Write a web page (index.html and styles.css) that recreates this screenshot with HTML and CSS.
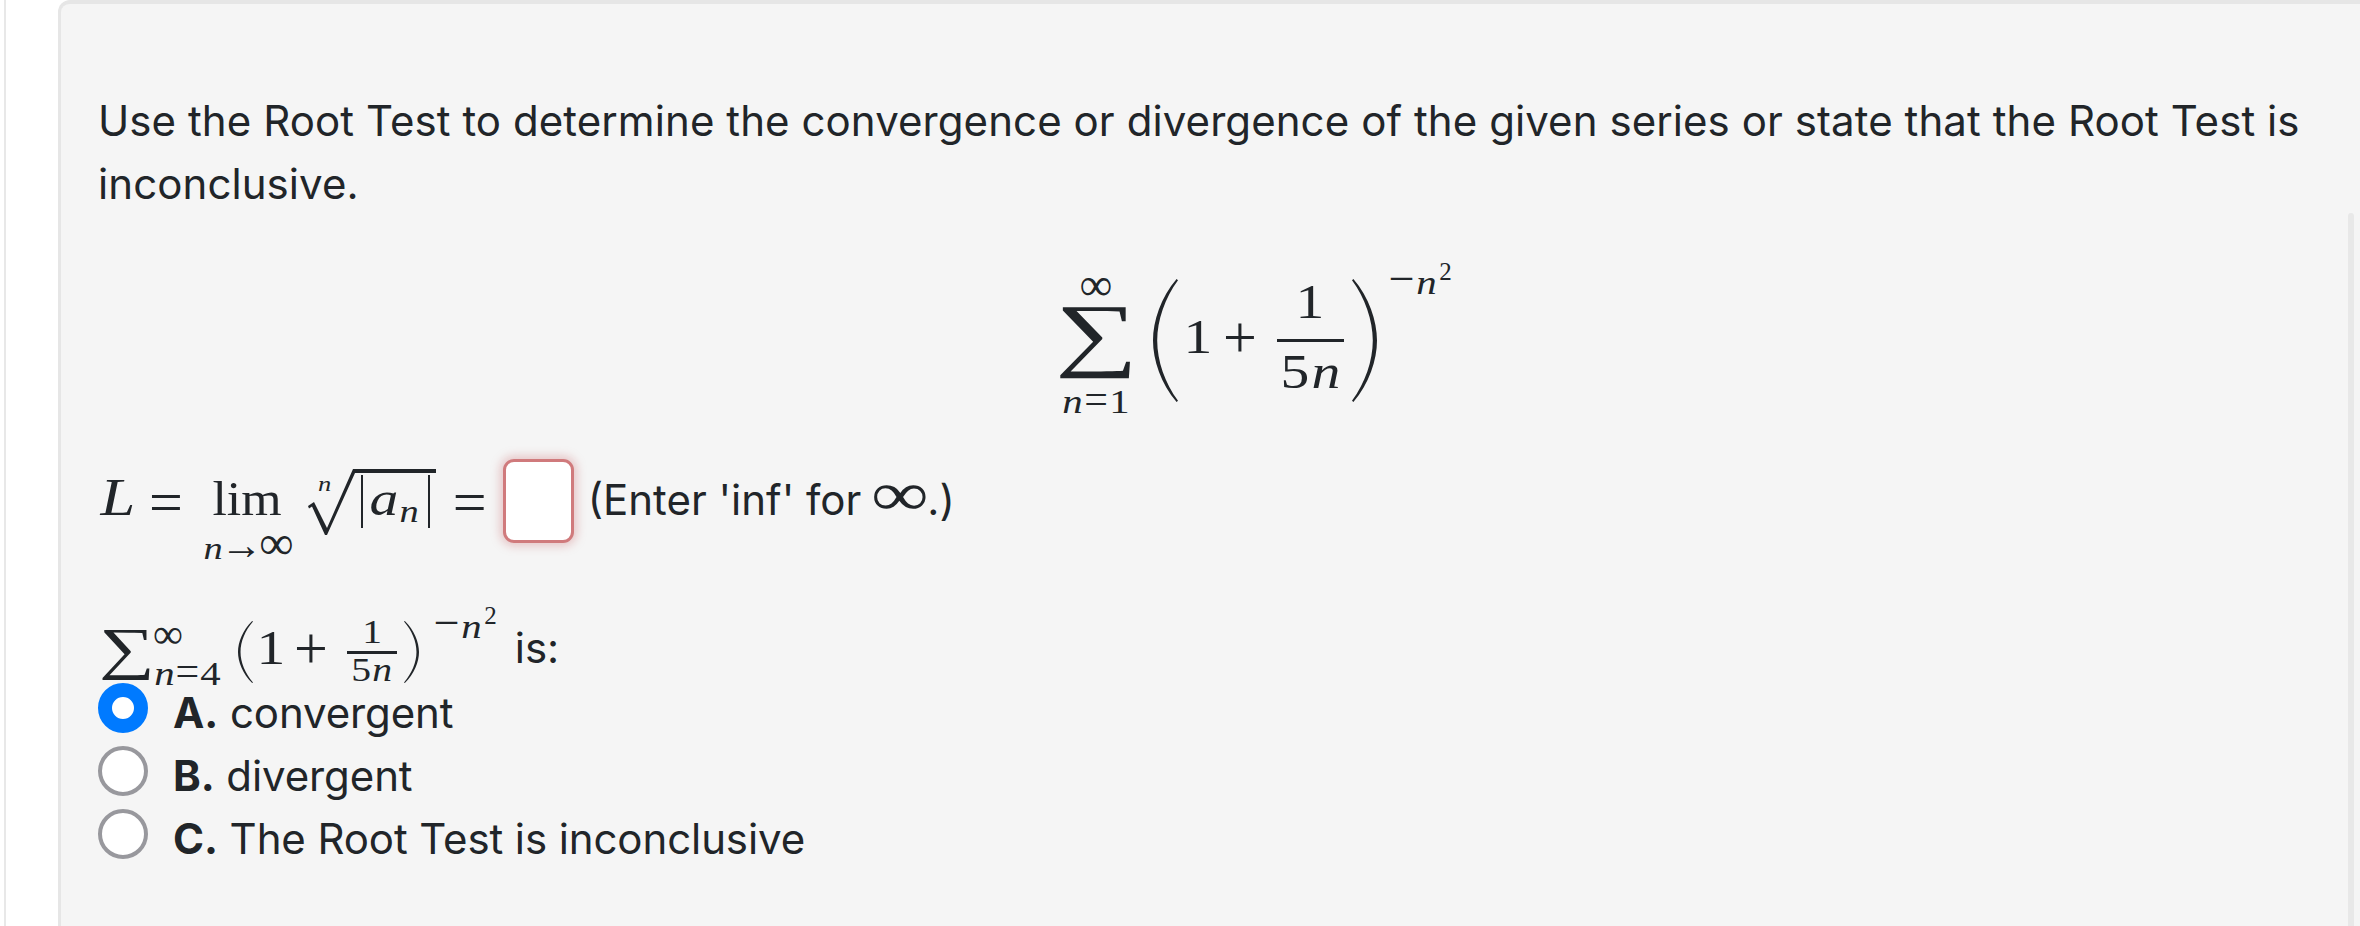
FILE: index.html
```html
<!DOCTYPE html>
<html lang="en">
<head>
<meta charset="utf-8">
<title>Root Test</title>
<link rel="stylesheet" href="styles.css">
</head>
<body>
<svg class="defs" width="0" height="0" aria-hidden="true">
  <symbol id="paren-l" viewBox="0 0 25 123" preserveAspectRatio="none">
    <path d="M23.6 0C8 18 0 42 0 61.5C0 81 8 105 23.6 123L25 121.8C12 104 4.2 82 4.2 61.5C4.2 41 12 19 25 1.2Z"/>
  </symbol>
  <symbol id="paren-r" viewBox="0 0 25 123" preserveAspectRatio="none">
    <path d="M1.4 0C17 18 25 42 25 61.5C25 81 17 105 1.4 123L0 121.8C13 104 20.8 82 20.8 61.5C20.8 41 13 19 0 1.2Z"/>
  </symbol>
</svg>
<div class="page">
  <main class="panel">
    <p class="question">Use the Root Test to determine the convergence or divergence of the given series or state that the Root Test is inconclusive.</p>

    <div class="display math">
      <div class="big-sum">
        <span class="big-inf">∞</span>
        <span class="big-sigma">∑</span>
        <span class="big-under"><span class="w">n</span><span class="up under-eq">=</span><span class="up w">1</span></span>
      </div>
      <svg class="big-paren bp-l"><use href="#paren-l"/></svg>
      <span class="d-one up w">1</span>
      <span class="d-plus up">+</span>
      <div class="d-frac">
        <span class="d-num up w">1</span>
        <span class="d-bar"></span>
        <span class="d-den"><span class="up w">5</span><span class="w">n</span></span>
      </div>
      <svg class="big-paren bp-r"><use href="#paren-r"/></svg>
      <div class="d-exp">
        <span class="exp-n"><span class="up minus">−</span><span class="w">n</span></span>
        <span class="exp-2 up">2</span>
      </div>
    </div>

    <div class="limit math">
      <span class="l-L w">L</span>
      <span class="l-eq up">=</span>
      <div class="lim">
        <span class="lim-word up w">lim</span>
        <span class="lim-under"><span class="w">n</span><span class="up lim-arrow">→</span><span class="up lim-inf">∞</span></span>
      </div>
      <div class="root">
        <svg class="radical" viewBox="0 0 47 70">
          <path d="M0 37L6 33L19 59L45 0H47V4L19 66H17L4 37.5L1 39.5Z"/>
        </svg>
        <span class="root-index w">n</span>
        <div class="radicand">
          <div class="abs">
            <span class="abs-a w">a</span><span class="abs-n w">n</span>
          </div>
        </div>
      </div>
      <span class="l-eq2 up">=</span>
      <input class="answer" type="text" aria-label="Limit value">
      <span class="hint">(Enter 'inf' for <span class="hint-inf">∞</span>.)</span>
    </div>

    <div class="series math">
      <span class="s-sigma">∑</span>
      <div class="s-limits">
        <span class="s-inf">∞</span>
        <span class="s-under"><span class="w">n</span><span class="up under-eq">=</span><span class="up w">4</span></span>
      </div>
      <svg class="small-paren sp-l"><use href="#paren-l"/></svg>
      <span class="s-one up w">1</span>
      <span class="s-plus up">+</span>
      <div class="s-frac">
        <span class="s-num up w">1</span>
        <span class="s-bar"></span>
        <span class="s-den"><span class="up w">5</span><span class="w">n</span></span>
      </div>
      <svg class="small-paren sp-r"><use href="#paren-r"/></svg>
      <div class="s-exp">
        <span class="exp-n"><span class="up minus">−</span><span class="w">n</span></span>
        <span class="exp-2 up">2</span>
      </div>
      <span class="is">is:</span>
    </div>

    <div class="options">
      <label class="option"><span class="radio checked"></span><span class="opt-text"><b>A.</b> convergent</span></label>
      <label class="option"><span class="radio"></span><span class="opt-text"><b>B.</b> divergent</span></label>
      <label class="option"><span class="radio"></span><span class="opt-text"><b>C.</b> The Root Test is inconclusive</span></label>
    </div>
  </main>
  <div class="scrollbar"></div>
</div>
</body>
</html>
```

FILE: styles.css
```css
html, body { margin: 0; padding: 0; background: #fff; }
body { width: 2360px; height: 926px; overflow: hidden; }
.defs { position: absolute; }
.page {
  position: relative;
  box-sizing: border-box;
  width: 2360px;
  height: 926px;
  padding-left: 58px;
  overflow: hidden;
  color: #212529;
  font-family: Inter, "Noto Sans", sans-serif;
  font-size: 42px;
}
.page::before {
  content: "";
  position: absolute;
  left: 4px; top: 0; bottom: 0;
  width: 2px;
  background: #e8e8e8;
}
.panel {
  box-sizing: border-box;
  width: 2330px;
  height: 960px;
  background: #f5f5f5;
  border-left: 3px solid #e6e6e6;
  border-top: 4px solid #e6e6e6;
  border-top-left-radius: 12px;
  padding: 85px 0 0 37px;
}
.question {
  margin: 0;
  width: 2230px;
  line-height: 63px;
  letter-spacing: 0.08px;
}
.math { font-family: "Liberation Serif", serif; display: flex; align-items: flex-start; }
.math span { line-height: 1; white-space: nowrap; }
.up { font-style: normal; }
.math .w { display: inline-block; transform: scaleX(1.2); margin: 0 0.08em; }

/* display equation */
.display { margin: 47px 0 0 964px; height: 197px; font-size: 48px; font-style: italic; }
.big-sum { display: flex; flex-direction: column; align-items: center; width: 68px; margin-top: 8px; }
.math .big-inf { font-style: normal; font-size: 46px; height: 30px; line-height: 30px; }
.math .big-sigma { font-style: normal; font-size: 82px; line-height: 72px; height: 72px; margin-top: -2px; transform: scaleX(1.42); }
.math .big-under { font-size: 34px; margin-top: 8px; }
.math .under-eq { font-size: 42px; }
.big-paren { display: block; width: 25px; height: 123px; fill: #212529; flex: none; }
.bp-l { margin: 17px 0 0 23px; }
.bp-r { margin: 17px 0 0 8px; }
.math .d-one { margin: 51px 4px 0 8px; }
.math .d-plus { font-size: 60px; margin: 45px 0 0 9px; }
.d-frac { display: flex; flex-direction: column; align-items: center; width: 67px; margin: 16px 0 0 20px; }
.math .d-num { height: 61px; }
.d-bar { display: block; width: 100%; height: 3px; background: #212529; }
.math .d-den { margin-top: 6px; }
.d-exp { display: flex; align-items: flex-start; margin: 2px 0 0 12px; }
.math .exp-n { font-size: 34px; }
.math .minus { font-size: 46px; line-height: 30px; }
.math .exp-2 { font-size: 25px; margin-top: -5px; margin-left: 2px; }

/* limit row */
.limit { height: 141px; margin-left: 2px; font-size: 48px; font-style: italic; }
.math .l-L { font-size: 52px; margin: 12.5px 0 0 4px; width: 34px; }
.math .l-eq { font-size: 60px; margin: 13px 0 0 11px; }
.lim { display: flex; flex-direction: column; align-items: center; width: 93px; margin: 16px 0 0 18px; }
.math .lim-word { transform: scaleX(1.08); margin: 0; }
.math .lim-under { font-size: 32px; margin-top: -4px; letter-spacing: -1px; }
.math .lim-arrow { font-size: 42px; margin: 0 -2px; }
.math .lim-inf { font-size: 48px; }
.root { position: relative; display: flex; align-items: flex-start; margin: 10px 0 0 14px; }
.radical { display: block; width: 47px; height: 70px; fill: #212529; flex: none; }
.math .root-index { position: absolute; left: 11px; top: 4px; font-size: 22px; margin: 0; }
.radicand { width: 81px; height: 62px; border-top: 4px solid #212529; }
.abs { box-sizing: border-box; display: flex; align-items: flex-start; width: 69px; height: 53px; margin: 2px 0 0 6px; padding-left: 5px; border-left: 2px solid #212529; border-right: 2px solid #212529; }
.math .abs-n { font-size: 32px; margin-top: 20px; margin-left: 1px; }
.math .l-eq2 { font-size: 60px; margin: 13px 0 0 17px; }
.answer {
  box-sizing: border-box;
  display: block;
  width: 71px;
  height: 84px;
  margin: 0 0 0 16px;
  padding: 0;
  background: #fff;
  border: 3px solid #d07a7c;
  border-radius: 11px;
  outline: none;
  box-shadow: 0 0 10px 3px rgba(208, 122, 124, 0.4);
}
.math .hint {
  font-family: Inter, "Noto Sans", sans-serif;
  font-size: 42px;
  font-style: normal;
  line-height: 64px;
  margin: 9px 0 0 14px;
}
.math .hint-inf { display: inline-block; font-family: "Liberation Serif", serif; font-size: 62px; line-height: 30px; transform: scaleX(1.3); margin: 0 5px; }

/* series row */
.series { height: 81px; margin-left: 3px; font-size: 48px; font-style: italic; }
.math .s-sigma { font-style: normal; font-size: 58px; line-height: 50px; height: 50px; width: 52px; margin-top: 24px; text-align: center; transform: scaleX(1.35); }
.s-limits { display: flex; flex-direction: column; width: 72px; margin-top: 18px; }
.math .s-inf { font-style: normal; font-size: 42px; height: 32px; line-height: 32px; }
.math .s-under { font-size: 34px; }
.small-paren { display: block; width: 15px; height: 62px; fill: #212529; flex: none; }
.sp-l { margin: 21px 0 0 13px; }
.sp-r { margin: 21px 0 0 7px; }
.math .s-one { margin: 24px 3px 0 6px; }
.math .s-plus { font-size: 60px; margin: 18px 0 0 8px; }
.s-frac { display: flex; flex-direction: column; align-items: center; width: 50px; margin: 16px 0 0 19px; font-size: 33px; }
.math .s-num { height: 35px; }
.s-bar { display: block; width: 100%; height: 3px; background: #212529; }
.math .s-den { margin-top: 0; }
.s-exp { display: flex; align-items: flex-start; margin: 8px 0 0 15px; }
.math .is {
  font-family: Inter, "Noto Sans", sans-serif;
  font-size: 42px;
  font-style: normal;
  line-height: 64px;
  margin: 16px 0 0 18px;
}

/* options */
.option { display: flex; align-items: flex-start; height: 63px; line-height: 63px; letter-spacing: -0.1px; }
.radio {
  box-sizing: border-box;
  flex: none;
  width: 50px;
  height: 50px;
  margin-top: 2px;
  background: #fff;
  border: 4px solid #98989d;
  border-radius: 50%;
}
.radio.checked { border: 14.5px solid #007aff; }
.opt-text { margin-left: 25px; }
.opt-text b { font-weight: 700; }

.scrollbar {
  position: absolute;
  right: 6px;
  top: 213px;
  bottom: 0;
  width: 6px;
  border-radius: 3px 3px 0 0;
  background: #e8e8e8;
}
```
